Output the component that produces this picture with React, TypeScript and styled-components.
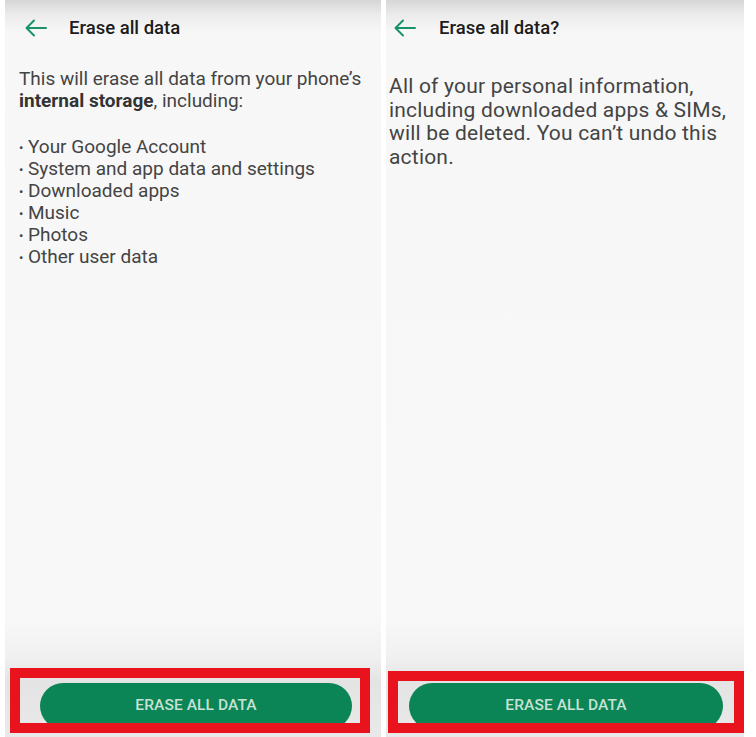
import styled, { createGlobalStyle } from "styled-components";

const GlobalStyle = createGlobalStyle`
  html, body {
    margin: 0;
    padding: 0;
    background: #ffffff;
  }
  body {
    font-family: Roboto, "Noto Sans", Arial, sans-serif;
  }
`;

const Page = styled.div`
  display: flex;
  width: 756px;
  height: 737px;
  overflow: hidden;
  background: #ffffff;
`;

const Panel = styled.div<{ $left: number; $width: number }>`
  position: relative;
  margin-left: ${(p) => p.$left}px;
  width: ${(p) => p.$width}px;
  height: 737px;
  display: flex;
  flex-direction: column;
  background: linear-gradient(
    to bottom,
    #d6d6d6 0px,
    #ebebeb 14px,
    #f7f7f7 32px,
    #f8f8f8 620px,
    #efefef 662px
  );
`;

const Header = styled.div<{ $arrowLeft: number; $gap: number }>`
  display: flex;
  align-items: center;
  height: 55px;
  padding-left: ${(p) => p.$arrowLeft}px;
  gap: ${(p) => p.$gap}px;
`;

const Title = styled.span`
  font-size: 18.5px;
  font-weight: 500;
  color: #1c1c1c;
`;

const Body = styled.div<{ $pad: number; $top: number; $size: number; $lh: number; $ls: number }>`
  padding: ${(p) => p.$top}px 0 0 ${(p) => p.$pad}px;
  font-size: ${(p) => p.$size}px;
  line-height: ${(p) => p.$lh}px;
  letter-spacing: ${(p) => p.$ls}px;
  color: #444444;
  flex: 1;
`;

const Strong = styled.b`
  font-weight: 700;
  color: #333333;
`;

const List = styled.ul`
  list-style: none;
  margin: 24px 0 0;
  padding: 0;
`;

const Item = styled.li`
  height: 22px;
  line-height: 22px;
  &::before {
    content: "•";
    display: inline-block;
    width: 9px;
    font-size: 13px;
    line-height: 0;
    vertical-align: 1px;
  }
`;

const Footer = styled.div<{ $btnLeft: number }>`
  height: 77px;
  padding: 23px 0 0 ${(p) => p.$btnLeft}px;
  box-sizing: border-box;
  background: linear-gradient(to bottom, #efefef, #e4e4e4 22px, #e9e9e9);
`;

const PillButton = styled.button<{ $width: number }>`
  width: ${(p) => p.$width}px;
  height: 46px;
  border: none;
  border-radius: 23px;
  background: #0b8456;
  color: #c6e2d4;
  font-family: Roboto, Arial, sans-serif;
  font-size: 15.5px;
  font-weight: 500;
  letter-spacing: 0.1px;
  display: flex;
  align-items: flex-start;
  justify-content: center;
  padding: 13px 0 0;
  box-sizing: border-box;
`;

const Highlight = styled.div<{ $left: number; $top: number; $w: number; $h: number }>`
  position: absolute;
  left: ${(p) => p.$left}px;
  top: ${(p) => p.$top}px;
  width: ${(p) => p.$w}px;
  height: ${(p) => p.$h}px;
  border: 10px solid #e8131c;
  box-sizing: border-box;
  pointer-events: none;
`;

const BackArrow = () => (
  <svg width="24" height="20" viewBox="0 0 24 20" fill="none">
    <path
      d="M22 10H3M10 2.5L2.5 10L10 17.5"
      stroke="#16936a"
      strokeWidth="2"
      strokeLinecap="round"
      strokeLinejoin="round"
    />
  </svg>
);

const items = [
  "Your Google Account",
  "System and app data and settings",
  "Downloaded apps",
  "Music",
  "Photos",
  "Other user data",
];

export default function App() {
  return (
    <Page>
      <GlobalStyle />
      <Panel $left={5} $width={376}>
        <Header $arrowLeft={19} $gap={21}>
          <BackArrow />
          <Title>Erase all data</Title>
        </Header>
        <Body $pad={14} $top={13} $size={19} $lh={22} $ls={0}>
          This will erase all data from your phone’s
          <br />
          <Strong>internal storage</Strong>, including:
          <List>
            {items.map((t) => (
              <Item key={t}>{t}</Item>
            ))}
          </List>
        </Body>
        <Footer $btnLeft={35}>
          <PillButton $width={312}>ERASE ALL DATA</PillButton>
        </Footer>
        <Highlight $left={5} $top={668} $w={360} $h={65} />
      </Panel>

      <Panel $left={5} $width={358}>
        <Header $arrowLeft={7} $gap={22}>
          <BackArrow />
          <Title>Erase all data?</Title>
        </Header>
        <Body $pad={3} $top={20} $size={21} $lh={23.7} $ls={0.2}>
          All of your personal information,
          <br />
          including downloaded apps &amp; SIMs,
          <br />
          will be deleted. You can’t undo this
          <br />
          action.
        </Body>
        <Footer $btnLeft={23}>
          <PillButton $width={314}>ERASE ALL DATA</PillButton>
        </Footer>
        <Highlight $left={2} $top={671} $w={356} $h={62} />
      </Panel>
    </Page>
  );
}
